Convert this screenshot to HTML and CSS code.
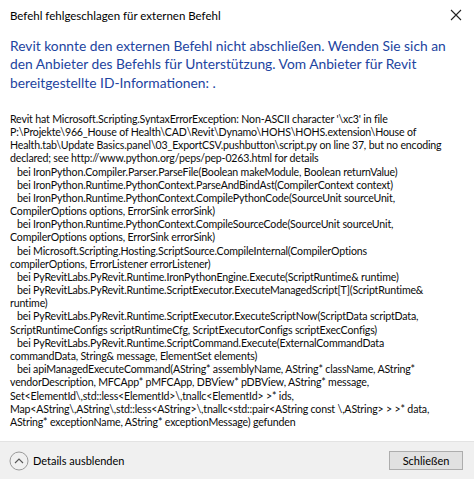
FILE: index.html
```html
<!DOCTYPE html>
<html lang="de">
<head>
<meta charset="utf-8">
<title>Befehl fehlgeschlagen</title>
<link rel="stylesheet" href="styles.css">
</head>
<body>
<div class="dialog">
  <div class="titlebar">
    <span class="title">Befehl fehlgeschlagen für externen Befehl</span>
    <span class="close" aria-label="Schließen">
      <svg width="12" height="12" viewBox="0 0 12 12"><path d="M1 1 L11 11 M11 1 L1 11" stroke="#222" stroke-width="1.1" fill="none"/></svg>
    </span>
  </div>
  <div class="instruction">
    <div class="line">Revit konnte den externen Befehl nicht abschließen. Wenden Sie sich an</div>
    <div class="line">den Anbieter des Befehls für Unterstützung. Vom Anbieter für Revit</div>
    <div class="line">bereitgestellte ID-Informationen: .</div>
  </div>
  <div class="details">
    <div class="line">Revit hat Microsoft.Scripting.SyntaxErrorException: Non-ASCII character '\xc3' in file</div>
    <div class="line">P:\Projekte\966_House of Health\CAD\Revit\Dynamo\HOHS\HOHS.extension\House of</div>
    <div class="line">Health.tab\Update Basics.panel\03_ExportCSV.pushbutton\script.py on line 37, but no encoding</div>
    <div class="line">declared; see http://www.python.org/peps/pep-0263.html for details</div>
    <div class="line in">bei IronPython.Compiler.Parser.ParseFile(Boolean makeModule, Boolean returnValue)</div>
    <div class="line in">bei IronPython.Runtime.PythonContext.ParseAndBindAst(CompilerContext context)</div>
    <div class="line in">bei IronPython.Runtime.PythonContext.CompilePythonCode(SourceUnit sourceUnit,</div>
    <div class="line">CompilerOptions options, ErrorSink errorSink)</div>
    <div class="line in">bei IronPython.Runtime.PythonContext.CompileSourceCode(SourceUnit sourceUnit,</div>
    <div class="line">CompilerOptions options, ErrorSink errorSink)</div>
    <div class="line in">bei Microsoft.Scripting.Hosting.ScriptSource.CompileInternal(CompilerOptions</div>
    <div class="line">compilerOptions, ErrorListener errorListener)</div>
    <div class="line in">bei PyRevitLabs.PyRevit.Runtime.IronPythonEngine.Execute(ScriptRuntime&amp; runtime)</div>
    <div class="line in">bei PyRevitLabs.PyRevit.Runtime.ScriptExecutor.ExecuteManagedScript[T](ScriptRuntime&amp;</div>
    <div class="line">runtime)</div>
    <div class="line in">bei PyRevitLabs.PyRevit.Runtime.ScriptExecutor.ExecuteScriptNow(ScriptData scriptData,</div>
    <div class="line">ScriptRuntimeConfigs scriptRuntimeCfg, ScriptExecutorConfigs scriptExecConfigs)</div>
    <div class="line in">bei PyRevitLabs.PyRevit.Runtime.ScriptCommand.Execute(ExternalCommandData</div>
    <div class="line">commandData, String&amp; message, ElementSet elements)</div>
    <div class="line in">bei apiManagedExecuteCommand(AString* assemblyName, AString* className, AString*</div>
    <div class="line">vendorDescription, MFCApp* pMFCApp, DBView* pDBView, AString* message,</div>
    <div class="line">Set&lt;ElementId\,std::less&lt;ElementId&gt;\,tnallc&lt;ElementId&gt; &gt;* ids,</div>
    <div class="line">Map&lt;AString\,AString\,std::less&lt;AString&gt;\,tnallc&lt;std::pair&lt;AString const \,AString&gt; &gt; &gt;* data,</div>
    <div class="line">AString* exceptionName, AString* exceptionMessage) gefunden</div>
  </div>
  <div class="footer">
    <div class="toggle">
      <svg class="chev" width="20" height="20" viewBox="0 0 20 20"><circle cx="10" cy="10" r="9" fill="none" stroke="#9a9a9a" stroke-width="1"/><path d="M6 12 L10 8 L14 12" fill="none" stroke="#555" stroke-width="1.1"/></svg>
      <span>Details ausblenden</span>
    </div>
    <button class="btn">Schließen</button>
  </div>
</div>
</body>
</html>
```
FILE: styles.css
```css
html, body {
  margin: 0;
  padding: 0;
  background: #ffffff;
}
.dialog {
  width: 474px;
  height: 479px;
  display: flex;
  flex-direction: column;
  font-family: Lato, "Noto Sans", sans-serif;
  color: #000;
  overflow: hidden;
}
.titlebar {
  height: 30px;
  display: flex;
  align-items: center;
  justify-content: space-between;
  padding: 0 8px 0 10px;
}
.title {
  font-size: 11.5px;
  color: #000;
  white-space: nowrap;
}
.close {
  display: flex;
  width: 20px;
  justify-content: center;
}
.instruction {
  padding: 7px 10px 0 10px;
  color: #1d44a0;
  font-size: 13.8px;
  line-height: 18.3px;
}
.line {
  white-space: nowrap;
}
.details {
  padding: 21px 10px 0 10px;
  font-size: 10.6px;
  letter-spacing: -0.17px;
  line-height: 13.17px;
  color: #0a0a0a;
}
.details .in {
  padding-left: 7px;
}
.footer {
  margin-top: auto;
  height: 37px;
  background: #f0f0f0;
  border-top: 1px solid #e3e3e3;
  display: flex;
  align-items: center;
  justify-content: space-between;
  padding: 0 11px 0 9px;
}
.toggle {
  display: flex;
  align-items: center;
  gap: 4px;
  font-size: 11px;
  color: #000;
}
.chev {
  display: block;
}
.btn {
  width: 74px;
  height: 19px;
  background: #e1e1e1;
  border: 1px solid #adadad;
  font-family: Lato, "Noto Sans", sans-serif;
  font-size: 11px;
  padding: 0;
  color: #000;
}
```
